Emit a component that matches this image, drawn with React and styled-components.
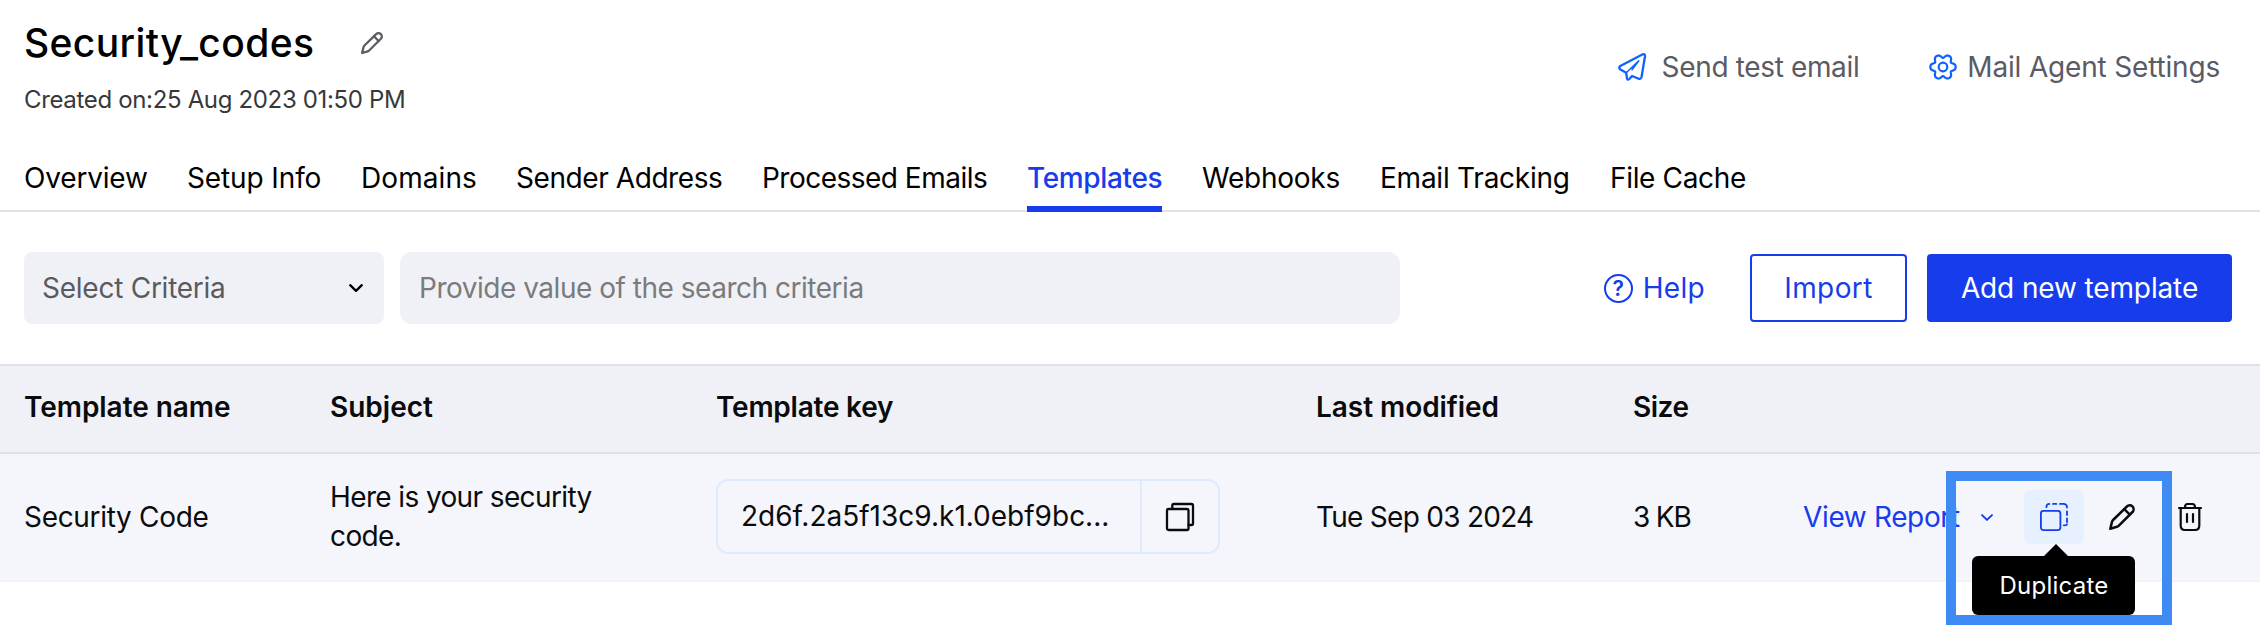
import React from "react";
import styled, { createGlobalStyle } from "styled-components";

const GlobalStyle = createGlobalStyle`
  * {
    box-sizing: border-box;
  }
  body {
    margin: 0;
    background: #ffffff;
    color: #000000;
    font-family: Inter, "Liberation Sans", sans-serif;
    font-size: 28px;
  }
  svg {
    display: block;
    flex: none;
    fill: none;
    stroke: currentColor;
    stroke-linecap: round;
    stroke-linejoin: round;
    overflow: visible;
  }
`;

const Page = styled.div`
  width: 2260px;
  height: 626px;
  overflow: hidden;
`;

const Label = styled.span`
  letter-spacing: ${(p) => p.$track || 0}px;
  white-space: nowrap;
`;

const HeaderContainer = styled.header`
  display: flex;
  justify-content: space-between;
  height: 146px;
  padding: 22px 40px 0 24px;
`;

const TitleRow = styled.div`
  display: flex;
  align-items: center;
  gap: 45px;
  height: 41px;
  color: #5c5c66;
`;

const Title = styled.h1`
  margin: 0;
  width: 292px;
  color: #000000;
  font-size: 39px;
  font-weight: 500;
  line-height: 41px;
  letter-spacing: 0.38px;
`;

const Created = styled.div`
  margin-top: 25px;
  color: #38383a;
  font-size: 24px;
  line-height: 24px;
  letter-spacing: -0.34px;
`;

const HeaderLinks = styled.div`
  display: flex;
  align-items: center;
  gap: 70px;
  height: 90px;
`;

const HeaderLink = styled.a`
  display: flex;
  align-items: center;
  gap: ${(p) => p.$gap}px;
  color: #5a5b64;

  svg {
    color: #0d62ff;
  }
`;

const Tabs = styled.nav`
  display: flex;
  gap: 40px;
  height: 66px;
  padding-left: 24px;
  border-bottom: 2px solid #e3e3e4;
`;

const Tab = styled.a`
  width: ${(p) => p.$width}px;
  height: 66px;
  line-height: 64px;
  letter-spacing: ${(p) => p.$track}px;
  white-space: nowrap;
  color: ${(p) => (p.$active ? "#163ceb" : "#000000")};
  font-weight: ${(p) => (p.$active ? 500 : 400)};
  border-bottom: ${(p) => (p.$active ? "6px solid #163ceb" : "none")};
`;

const Toolbar = styled.div`
  display: flex;
  align-items: center;
  height: 152px;
  padding: 0 28px 0 24px;
`;

const Select = styled.div`
  display: flex;
  align-items: center;
  justify-content: space-between;
  width: 360px;
  height: 72px;
  padding: 0 21px 0 18px;
  border-radius: 8px;
  background: #f0f1f7;
  color: #5a5b5f;

  svg {
    color: #000000;
  }
`;

const Input = styled.input`
  width: 1000px;
  height: 72px;
  margin-left: 16px;
  padding: 0 19px;
  border: none;
  border-radius: 12px;
  background: #f0f1f7;
  font: inherit;
  letter-spacing: -0.48px;

  &::placeholder {
    color: #7b7b7b;
    opacity: 1;
  }
`;

const ToolbarActions = styled.div`
  display: flex;
  align-items: center;
  margin-left: auto;
`;

const Help = styled.a`
  display: flex;
  align-items: center;
  gap: 10px;
  margin-right: 45px;
  color: #163ceb;
`;

const HelpIcon = styled.span`
  display: flex;
  align-items: center;
  justify-content: center;
  width: 29px;
  height: 29px;
  border: 2px solid #163ceb;
  border-radius: 50%;
  font-size: 21px;
  font-weight: 600;
  line-height: 1;
`;

const Button = styled.button`
  width: ${(p) => p.$width}px;
  height: 68px;
  padding: 0;
  border: 2px solid #163ceb;
  border-radius: 4px;
  background: ${(p) => (p.$primary ? "#163ceb" : "#ffffff")};
  color: ${(p) => (p.$primary ? "#ffffff" : "#163ceb")};
  font: inherit;
  letter-spacing: ${(p) => p.$track}px;

  & + & {
    margin-left: 20px;
  }
`;

const Row = styled.div`
  display: grid;
  grid-template-columns: 306px 386px 600px 317px 170px 1fr;
  align-items: center;
  padding-left: 24px;
  color: #0a0b0d;
`;

const TableHeader = styled(Row)`
  height: 90px;
  padding-bottom: 4px;
  border-top: 2px solid #e0e1e6;
  border-bottom: 2px solid #e0e1e6;
  background: #f0f1f7;
  font-weight: 600;
`;

const TableRow = styled(Row)`
  position: relative;
  height: 128px;
  border-bottom: 2px solid #f2f3f5;
  background: #f5f6fb;
`;

const Subject = styled.div`
  width: 300px;
  line-height: 39px;
  letter-spacing: -0.62px;
`;

const KeyBox = styled.div`
  display: flex;
  width: 504px;
  height: 75px;
  margin-bottom: 1px;
  border: 2px solid #dfebfd;
  border-radius: 12px;
`;

const KeyValue = styled.div`
  width: 422px;
  padding-left: 23px;
  line-height: 71px;
`;

const CopyButton = styled.div`
  display: flex;
  flex: 1;
  align-items: center;
  justify-content: center;
  border-left: 2px solid #dfebfd;
`;

const Actions = styled.div`
  display: flex;
  align-items: center;
  color: #163ceb;
`;

const ReportLink = styled.a`
  display: flex;
  align-items: center;
  width: 221px;

  svg {
    margin-left: 21px;
  }
`;

const DuplicateButton = styled.div`
  position: relative;
  display: flex;
  align-items: center;
  justify-content: center;
  width: 60px;
  height: 54px;
  border-radius: 6px;
  background: #e6f0ff;
`;

const IconButton = styled.div`
  margin-left: ${(p) => p.$gap}px;
  color: #0a0b0d;
`;

const Tooltip = styled.div`
  position: absolute;
  top: 66px;
  left: -52px;
  z-index: 2;
  width: 163px;
  height: 59px;
  border-radius: 6px;
  background: #000000;
  color: #ffffff;
  font-size: 24px;
  line-height: 59px;
  letter-spacing: 0.25px;
  text-align: center;
  text-indent: 1px;

  &::before {
    content: "";
    position: absolute;
    top: -12px;
    left: 72px;
    border: 12px solid transparent;
    border-top: none;
    border-bottom-color: #000000;
  }
`;

const Highlight = styled.div`
  position: absolute;
  top: 17px;
  left: 1946px;
  width: 226px;
  height: 154px;
  border: 10px solid #3e8cf3;
`;

const TABS = [
  { name: "Overview", width: 123, track: -0.18 },
  { name: "Setup Info", width: 134, track: -0.12 },
  { name: "Domains", width: 115, track: 0.07 },
  { name: "Sender Address", width: 206, track: -0.42 },
  { name: "Processed Emails", width: 225, track: -0.51 },
  { name: "Templates", width: 135, track: -0.35, active: true },
  { name: "Webhooks", width: 138, track: -0.25 },
  { name: "Email Tracking", width: 190, track: -0.24 },
  { name: "File Cache", width: 136, track: -0.34 },
];

const COLUMNS = [
  { name: "Template name", track: -0.05 },
  { name: "Subject" },
  { name: "Template key", track: -0.23 },
  { name: "Last modified", track: -0.05 },
  { name: "Size", track: -0.5 },
];

// six rounded teeth around a 14,14 centre
const gearPath =
  Array.from({ length: 90 }, (_, i) => {
    const a = (i / 90) * Math.PI * 2;
    const r = 11.2 + 1.8 * Math.cos(6 * a) - 0.3 * Math.cos(12 * a);
    const x = (14 + r * Math.cos(a)).toFixed(2);
    const y = (14 + r * Math.sin(a)).toFixed(2);
    return `${i ? "L" : "M"}${x} ${y}`;
  }).join("") + "Z";

const Pencil = ({ size, stroke }) => (
  <svg width={size} height={size} viewBox="0 0 26 26" strokeWidth={stroke}>
    <path d="M1.3 24.8 3 17.9Q3.3 16.8 4.1 16L17.9 2.5A3.9 3.9 0 0 1 23.5 8L9.6 21.8Q8.9 22.5 7.9 22.8Z" />
    <path d="m15.3 5.1 5.5 5.5" />
  </svg>
);

const Chevron = ({ width, height }) => (
  <svg width={width} height={height} viewBox="0 0 14 8" strokeWidth="2.3">
    <path d="m1.2 1.2 5.8 5.6 5.8-5.6" />
  </svg>
);

const SendIcon = () => (
  <svg width="28" height="28" viewBox="0 0 28 28" strokeWidth="2.3">
    <path d="M24.8 1.3 2.3 13Q.3 14.6 2 16.3L8.2 19.8 9 25.6Q9.7 27.4 11.3 26L14 23 20.8 25.8Q22.9 26.4 23.5 24.3L27 3.2Q27.2.8 24.8 1.3Z" />
    <path d="M8.2 19.8 20.8 7.7 14 16.8" strokeWidth="1.5" />
  </svg>
);

const GearIcon = () => (
  <svg width="28" height="28" viewBox="0 0 28 28" strokeWidth="2.2">
    <path d={gearPath} />
    <circle cx="14" cy="14" r="4.3" />
  </svg>
);

const CopyIcon = () => (
  <svg width="28" height="28" viewBox="0 0 28 28" strokeWidth="2.3">
    <rect x="1" y="6" width="21.5" height="21" rx="1.5" />
    <path d="M6.3 6V2.5Q6.3 1 7.8 1H25.5Q27 1 27 2.5V20.5Q27 22 25.5 22H22.5" />
  </svg>
);

const DuplicateIcon = () => (
  <svg width="28" height="28" viewBox="0 0 28 28" strokeWidth="1.8">
    <rect x=".9" y="7.9" width="19.5" height="19.2" rx="2.5" />
    <path d="M6.4 4.2Q6.4.9 9.3.9M13 .9h3.3M20 .9h3.3Q27 .9 27 4.5M27 8.5v3.5M27 15.5v3.5M27 21.3Q26.5 22.3 23.8 22.3" />
  </svg>
);

const TrashIcon = () => (
  <svg width="24" height="28" viewBox="0 0 24 28" strokeWidth="2.2">
    <path d="M1 5H23M7 4.5Q7 1 9.5 1H14.5Q17 1 17 4.5" />
    <path d="M2.7 5V22.5Q2.7 27 7 27H17Q21.3 27 21.3 22.5V5" />
    <path d="M9 11V19M15 11V19" />
  </svg>
);

function Header() {
  return (
    <HeaderContainer>
      <div>
        <TitleRow>
          <Title>Security_codes</Title>
          <Pencil size={22} stroke={2.7} />
        </TitleRow>
        <Created>Created on:25 Aug 2023 01:50 PM</Created>
      </div>
      <HeaderLinks>
        <HeaderLink $gap={16}>
          <SendIcon />
          <Label $track={-0.35}>Send test email</Label>
        </HeaderLink>
        <HeaderLink $gap={10}>
          <GearIcon />
          <Label $track={-0.18}>Mail Agent Settings</Label>
        </HeaderLink>
      </HeaderLinks>
    </HeaderContainer>
  );
}

function App() {
  return (
    <Page>
      <GlobalStyle />
      <Header />
      <Tabs>
        {TABS.map((tab) => (
          <Tab
            key={tab.name}
            $width={tab.width}
            $track={tab.track}
            $active={tab.active}
          >
            {tab.name}
          </Tab>
        ))}
      </Tabs>
      <Toolbar>
        <Select>
          <Label $track={-0.25}>Select Criteria</Label>
          <Chevron width={14} height={8} />
        </Select>
        <Input placeholder="Provide value of the search criteria" />
        <ToolbarActions>
          <Help>
            <HelpIcon>?</HelpIcon>
            <Label $track={0.3}>Help</Label>
          </Help>
          <Button $width={157} $track={0.4}>
            Import
          </Button>
          <Button $width={305} $track={-0.13} $primary>
            Add new template
          </Button>
        </ToolbarActions>
      </Toolbar>
      <TableHeader>
        {COLUMNS.map((column) => (
          <Label key={column.name} $track={column.track}>
            {column.name}
          </Label>
        ))}
      </TableHeader>
      <TableRow>
        <Label $track={-0.32}>Security Code</Label>
        <Subject>Here is your security code.</Subject>
        <KeyBox>
          <KeyValue>2d6f.2a5f13c9.k1.0ebf9bc...</KeyValue>
          <CopyButton>
            <CopyIcon />
          </CopyButton>
        </KeyBox>
        <Label $track={-0.73}>Tue Sep 03 2024</Label>
        <Label $track={-1.2}>3 KB</Label>
        <Actions>
          <ReportLink>
            <Label $track={-0.36}>View Report</Label>
            <Chevron width={12} height={7} />
          </ReportLink>
          <DuplicateButton>
            <DuplicateIcon />
            <Tooltip>Duplicate</Tooltip>
          </DuplicateButton>
          <IconButton $gap={25}>
            <Pencil size={26} stroke={2.5} />
          </IconButton>
          <IconButton $gap={43}>
            <TrashIcon />
          </IconButton>
        </Actions>
        <Highlight />
      </TableRow>
    </Page>
  );
}

export default App;
